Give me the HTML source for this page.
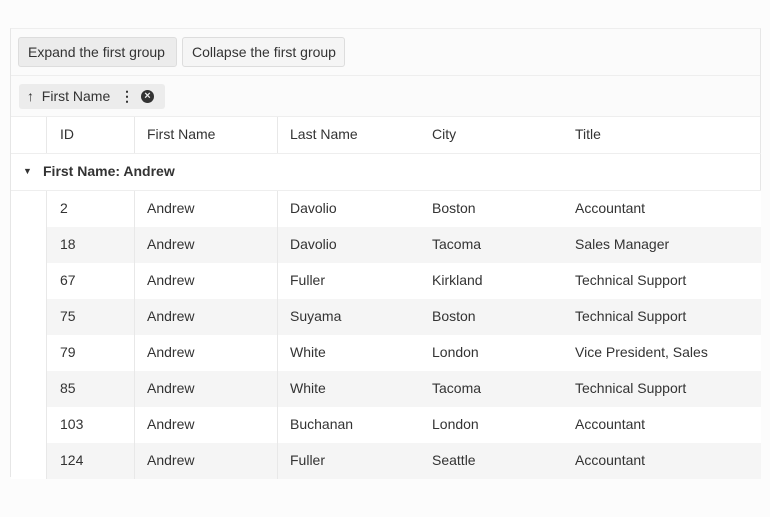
<!DOCTYPE html>
<html><head><style>
*{box-sizing:border-box;margin:0;padding:0}
body{width:770px;height:517px;background:#fcfcfc;font-family:"Liberation Sans",Arial,sans-serif;font-size:14px;color:#333;position:relative;overflow:hidden}
.grid{position:absolute;left:10px;top:28px;width:751px;height:449px;border-left:1px solid #e6e6e6;border-right:1px solid #e6e6e6;border-top:1px solid #eee;background:#fff}
.bar{position:absolute;left:0;top:0;width:100%;height:47px;border-bottom:1px solid #eee;background:#fbfbfb}
.btn{position:absolute;top:8px;height:30px;border:1px solid #ddd;border-radius:3px;background:#f5f5f5;padding:0 9px;line-height:28px;color:#333;white-space:nowrap}
.gp{position:absolute;left:0;top:47px;width:100%;height:41px;border-bottom:1px solid #eee;background:#fbfbfb}
.chip{position:absolute;left:8px;top:8px;height:25px;width:146px;border-radius:3px;background:#ececec;line-height:25px;padding-left:8px;white-space:nowrap}
.row{position:absolute;left:0;width:750px;height:36px;line-height:36px;white-space:nowrap}
.c{position:absolute;top:0;height:100%}
.sep{position:absolute;top:0;width:1px;height:100%;background:#e8e8e8}
</style></head><body>
<div class="grid">
 <div class="bar">
  <div class="btn" style="left:7px;width:159px;background:#ececec">Expand the first group</div>
  <div class="btn" style="left:171px;width:163px">Collapse the first group</div>
 </div>
 <div class="gp"><div class="chip">↑&nbsp; First Name <span style="position:absolute;left:101px;font-weight:bold">⋮</span><span style="position:absolute;left:122px;top:6px;width:13px;height:13px;border-radius:50%;background:#333;color:#eee;font-size:11px;line-height:13px;text-align:center;font-weight:bold">×</span></div></div>
 <div class="row" style="top:88px;height:37px;line-height:35px;border-bottom:1px solid #eee">
  <div class="sep" style="left:35px"></div><div class="sep" style="left:123px"></div><div class="sep" style="left:266px"></div>
  <div class="c" style="left:49px">ID</div><div class="c" style="left:136px">First Name</div><div class="c" style="left:279px">Last Name</div><div class="c" style="left:421px">City</div><div class="c" style="left:564px">Title</div>
 </div>
 <div class="row" style="top:125px;height:37px;line-height:35px;border-bottom:1px solid #eee;font-weight:bold">
  <span style="position:absolute;left:12px;font-size:9px">▼</span><span style="position:absolute;left:32px">First Name: Andrew</span>
 </div>
 <div id="rows"></div>
</div>
<script>
var d=[["2","Davolio","Boston","Accountant"],["18","Davolio","Tacoma","Sales Manager"],["67","Fuller","Kirkland","Technical Support"],["75","Suyama","Boston","Technical Support"],["79","White","London","Vice President, Sales"],["85","White","Tacoma","Technical Support"],["103","Buchanan","London","Accountant"],["124","Fuller","Seattle","Accountant"]];
var h="";d.forEach(function(r,i){h+='<div class="row" style="top:'+(162+i*36)+'px;line-height:34px;background:'+(i%2?'#f5f5f5':'#fff')+'"><div style="position:absolute;left:0;top:0;width:35px;height:36px;background:#fff"></div><div class="sep" style="left:35px"></div><div class="sep" style="left:123px"></div><div class="sep" style="left:266px"></div><div class="c" style="left:49px">'+r[0]+'</div><div class="c" style="left:136px">Andrew</div><div class="c" style="left:279px">'+r[1]+'</div><div class="c" style="left:421px">'+r[2]+'</div><div class="c" style="left:564px">'+r[3]+'</div></div>'});
document.getElementById("rows").outerHTML=h;
</script>
</body></html>
